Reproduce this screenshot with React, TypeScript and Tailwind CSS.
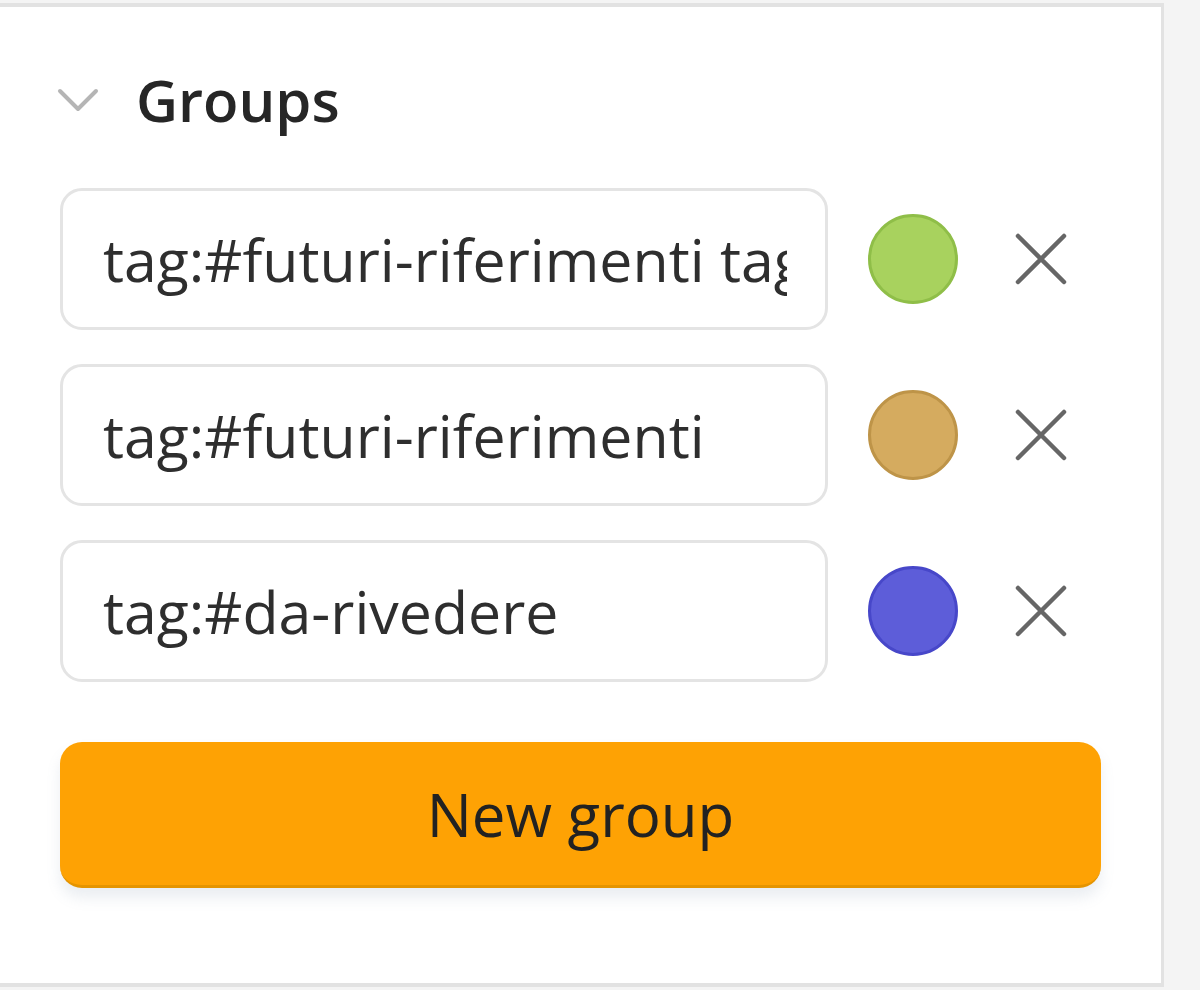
type Group = { query: string; color: string; ring: string };

const groups: Group[] = [
  { query: "tag:#futuri-riferimenti tag:#da-rivedere", color: "bg-[#a8d25e]", ring: "border-[#8fbe48]" },
  { query: "tag:#futuri-riferimenti", color: "bg-[#d5ab5f]", ring: "border-[#be9448]" },
  { query: "tag:#da-rivedere", color: "bg-[#5d5dd9]", ring: "border-[#4747c9]" },
];

function Chevron() {
  return (
    <svg width="44" height="28" viewBox="0 0 44 28" fill="none" className="ml-[-4px] text-[#b5b5b5]">
      <path d="M4 5 L22 23 L40 5" stroke="currentColor" strokeWidth="4" strokeLinecap="round" strokeLinejoin="round" />
    </svg>
  );
}

function Cross() {
  return (
    <svg width="54" height="54" viewBox="0 0 54 54" fill="none" className="ml-[56px] text-[#666]">
      <path d="M4 4 L50 50 M50 4 L4 50" stroke="currentColor" strokeWidth="4.5" strokeLinecap="round" />
    </svg>
  );
}

export default function App() {
  return (
    <div className="flex h-[990px] w-[1200px] bg-[#f4f4f4] font-['Open_Sans',sans-serif]">
      <div className="flex w-[1164px] flex-col pt-[3px] pb-[3px]">
        <div className="flex flex-1 flex-col border-y-4 border-r-[3px] border-[#e2e2e2] bg-white px-[60px]">
          {/* section header */}
          <div className="flex h-[181px] items-center pt-[4px]">
            <Chevron />
            <span className="ml-[36px] text-[58px] font-semibold text-[#262626]">Groups</span>
          </div>

          <div className="flex flex-col gap-[34px]">
            {groups.map((g, i) => (
              <div key={i} className="flex items-center">
                <input
                  readOnly
                  value={g.query}
                  className="h-[142px] w-[768px] rounded-[22px] border-[3px] border-[#e4e4e4] bg-white pl-[40px] pr-[38px] text-[59px] text-[#2e2e2e] outline-none"
                />
                <div className={`ml-[40px] h-[90px] w-[90px] rounded-full border-[3px] ${g.color} ${g.ring}`} />
                <Cross />
              </div>
            ))}
          </div>

          <button className="mt-[60px] h-[146px] w-full rounded-[22px] border-b-[3px] border-[#e59400] bg-[#fea204] text-[60px] text-[#222] shadow-[0_10px_14px_rgba(120,140,170,0.15)]">
            New group
          </button>
        </div>
      </div>
    </div>
  );
}
